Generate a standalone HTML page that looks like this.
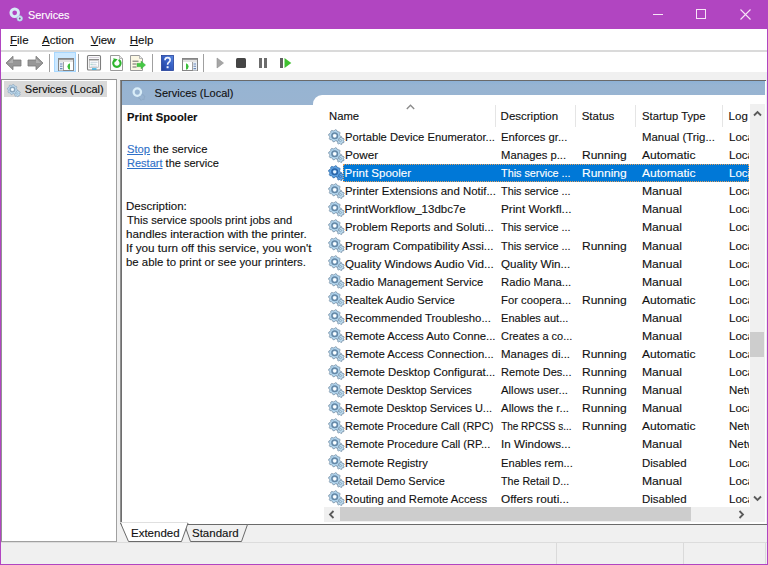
<!DOCTYPE html>
<html><head><meta charset="utf-8"><style>
*{box-sizing:border-box}
html,body{margin:0;padding:0}
body{width:768px;height:565px;position:relative;overflow:hidden;background:#f0f0f0;font-family:"Liberation Sans",sans-serif;font-size:12px;color:#111}
.a{position:absolute}
svg{display:block}
#title{left:0;top:0;width:768px;height:29px;background:#b145c1}
#title .t{left:28px;top:9px;color:#fff;font-size:11px;white-space:nowrap}
#menu{left:1px;top:29px;width:766px;height:21px;background:#fff}
#menu span{position:absolute;top:5px;font-size:12px}
#menu u{text-decoration:underline}
#msep{left:1px;top:50px;width:766px;height:2px;background:#dadada}
#tool{left:1px;top:52px;width:766px;height:20px;background:#fff}
#bl{left:0;top:0;width:1px;height:565px;background:#b145c1}
#br{left:767px;top:0;width:1px;height:565px;background:#b145c1}
#bb{left:0;top:564px;width:768px;height:1px;background:#b145c1}
#lp{left:1px;top:79px;width:116px;height:463px;background:#fff;border:1px solid #929292;border-right-color:#a0a0a0;border-bottom-color:#a0a0a0}
#lsel{left:4px;top:81px;width:103px;height:16px;background:#d9d9d9}
#lsel span{position:absolute;left:21px;top:2px;font-size:11px;white-space:nowrap}
#rp{left:120px;top:80px;width:646px;height:444px;background:#fff;border-left:1px solid #8f8f8f;border-top:1px solid #6a6a6a;box-shadow:inset 1px 0 0 #6e6e6e}
#hdr{left:122px;top:81px;width:643px;height:24px;background:linear-gradient(#8db1d6 0,#97b4d2 4px,#99b4d1 100%)}
#hdr span{position:absolute;left:34px;top:6px;color:#1e1e1e;font-size:11px;white-space:nowrap}
#tab{left:313px;top:95px;width:452px;height:30px;background:#fff;border-top-left-radius:9px}
#desc{left:127px;top:0;width:190px;color:#1a1a1a;font-size:11.5px}
#desc div{position:absolute;left:0;white-space:nowrap}
.t{position:absolute;white-space:nowrap;line-height:14px;-webkit-text-stroke:0.12px currentColor}
.lnk{color:#2f70c8;text-decoration:underline}
.row{position:absolute;left:322px;width:427px;height:18px;overflow:hidden}
.row span{position:absolute;top:2px;-webkit-text-stroke:0.12px currentColor;white-space:nowrap;font-size:11.5px;line-height:14px;transform-origin:1px 0}
.ic{position:absolute;left:4.5px;top:-0.5px;width:18px;height:18px}
.hl{position:absolute;left:21px;top:0;width:406px;height:18px;background:#0078d7;outline:1px dotted #e0a060;outline-offset:-1px}
.sel span{color:#fff}
.c1{left:22.5px}.c2{left:179px}.c3{left:260px}.c4{left:320px}.c5{left:407px}
#colhdr span{position:absolute;top:110px;font-size:11.5px;letter-spacing:-0.2px}
.vsep{position:absolute;top:105px;width:1px;height:22px;background:#e5e5e5}
#vsb{left:750px;top:104px;width:15px;height:403px;background:#f0f0f0}
#vth{left:750px;top:332px;width:14px;height:25px;background:#cdcdcd}
#hsb{left:324px;top:507px;width:441px;height:15px;background:#f0f0f0}
#hth{left:340px;top:507px;width:351px;height:14px;background:#cdcdcd}
#tabs{left:121px;top:525px;width:646px;height:17px;background:#f0f0f0}
#tabline{left:121px;top:524px;width:646px;height:1px;background:#6a6a6a}
#status{left:1px;top:542px;width:766px;height:22px;background:#f0f0f0;border-top:1px solid #dcdcdc}
.tsep{position:absolute;top:54px;width:1px;height:18px;background:#a0a0a0}
</style></head><body>
<div id="title" class="a">
  <svg class="a" style="left:8px;top:7px" width="16" height="15" viewBox="0 0 16 15"><circle cx="6.7" cy="5.8" r="3.8" fill="none" stroke="#d6ecf6" stroke-width="2.9"/><circle cx="11.75" cy="11.4" r="2.7" fill="#cfe6f3" stroke="#a9cde6" stroke-width="0.8"/><circle cx="11.75" cy="11.4" r="1" fill="#7a5a8a"/></svg>
    <div class="a" style="left:653px;top:14px;width:10px;height:1px;background:#f6e6f6"></div>
  <div class="a" style="left:696px;top:9px;width:10px;height:10px;border:1px solid #f6e6f6"></div>
  <svg class="a" style="left:740px;top:9px" width="11" height="11" viewBox="0 0 11 11"><path d="M0.5,0.5 L10.5,10.5 M10.5,0.5 L0.5,10.5" stroke="#f6e6f6" stroke-width="1.1"/></svg>
</div>
<div id="menu" class="a"></div>
<div id="msep" class="a"></div>
<div id="tool" class="a"></div>
<svg class="a" style="left:5px;top:55px" width="17" height="16" viewBox="0 0 17 16"><path d="M1,8 L8,1.2 L8,5 L16,5 L16,11 L8,11 L8,14.8 Z" fill="#979797" stroke="#7a7a7a" stroke-width="0.8"/><path d="M3,8 L8,3.5 L8,8 Z" fill="#b0b0b0"/></svg>
<svg class="a" style="left:27px;top:55px" width="17" height="16" viewBox="0 0 17 16"><path d="M16,8 L9,1.2 L9,5 L1,5 L1,11 L9,11 L9,14.8 Z" fill="#979797" stroke="#7a7a7a" stroke-width="0.8"/><path d="M14,8 L9,3.5 L9,8 Z" fill="#b0b0b0"/></svg>
<div class="tsep" style="left:49px"></div>
<div class="a" style="left:54px;top:52px;width:22px;height:20px;background:#cce8ff;border:1px solid #a8d8ff"></div>
<svg class="a" style="left:58px;top:58px" width="16" height="13" viewBox="0 0 16 13"><rect x="0.5" y="0.5" width="15" height="12" fill="#fff" stroke="#858585"/><rect x="1" y="1" width="14" height="1" fill="#9a9a9a"/><rect x="1" y="2.5" width="14" height="1" fill="#c8c8c8"/><rect x="1" y="4" width="4" height="8.5" fill="#e8eef4"/><path d="M5.5,4 V12.5" stroke="#8a8a8a" stroke-width="0.8"/><path d="M2,6 h2.5 M2,8.3 h2.5 M2,10.6 h2.5" stroke="#6a88b8" stroke-width="1.1"/><path d="M12,5.2 A3.4,3.4 0 0 0 12,11.8 Z" fill="#3cbf3c"/></svg>
<div class="tsep" style="left:78px"></div>
<svg class="a" style="left:86px;top:54px" width="16" height="17" viewBox="0 0 16 17"><rect x="1.5" y="1.5" width="13" height="14.5" rx="1" fill="#fafafa" stroke="#7e7e7e" stroke-width="1.1"/><path d="M3,3.6 h10" stroke="#d8d0dc" stroke-width="1"/><path d="M3,5.5 h10" stroke="#808080" stroke-width="0.9"/><rect x="3.5" y="6.5" width="9" height="7" fill="#fff" stroke="#a8a8a8" stroke-width="0.6"/><path d="M4.5,8.3 h7 M4.5,10.3 h6 M4.5,12.2 h7" stroke="#b8c8d4" stroke-width="0.8"/><path d="M4.5,10.3 h2" stroke="#9cd8c8" stroke-width="0.8"/><rect x="6" y="14.2" width="4.5" height="1.6" fill="#38b0e0"/></svg>
<svg class="a" style="left:110px;top:55px" width="14" height="17" viewBox="0 0 14 17"><path d="M0.5,0.5 H9.5 L12.5,3.5 V15.5 H0.5 Z" fill="#fdfdfd" stroke="#9a9a9a"/><path d="M9.5,0.5 V3.5 H12.5" fill="#e8e8e8" stroke="#a8a8a8" stroke-width="0.8"/><path d="M8.6,4.9 A3.7,3.7 0 1 1 5.2,4.9" fill="none" stroke="#2db42d" stroke-width="2.1"/><path d="M3.2,3.2 L7.6,4.2 L4.6,7.6 Z" fill="#2db42d"/></svg>
<svg class="a" style="left:130px;top:55px" width="17" height="17" viewBox="0 0 17 17"><path d="M0.5,0.5 H9.5 L12.5,3.5 V15.5 H0.5 Z" fill="#fbf7e4" stroke="#9a9a9a"/><path d="M9.5,0.5 V3.5 H12.5" fill="#eee" stroke="#a8a8a8" stroke-width="0.8"/><path d="M2.5,6.2 h6 M2.5,9 h4 M2.5,12 h4" stroke="#5a5a5a" stroke-width="0.9"/><path d="M7,8.3 H11 V6 L15.6,10 L11,14 V11.7 H7 Z" fill="#45c845" stroke="#3aa83a" stroke-width="0.4"/></svg>
<div class="tsep" style="left:152px"></div>
<svg class="a" style="left:160.5px;top:55px" width="13" height="16" viewBox="0 0 13 16"><defs><linearGradient id="hg" x1="0" y1="1" x2="1" y2="0"><stop offset="0" stop-color="#1f3f9e"/><stop offset="0.6" stop-color="#3a64c8"/><stop offset="1" stop-color="#5a8ae0"/></linearGradient></defs><rect x="0.5" y="0.5" width="12" height="15" fill="url(#hg)" stroke="#23409a" stroke-width="0.8"/><path d="M4,5.2 Q4,2.6 6.6,2.6 Q9.2,2.6 9.2,5 Q9.2,6.6 7.6,7.5 Q6.6,8.1 6.6,9.8" fill="none" stroke="#f0f4ff" stroke-width="1.6"/><rect x="5.6" y="11.2" width="2" height="2" fill="#f0f4ff"/></svg>
<svg class="a" style="left:182px;top:58px" width="16" height="13" viewBox="0 0 16 13"><rect x="0.5" y="0.5" width="15" height="12" fill="#fff" stroke="#858585"/><rect x="1" y="1" width="14" height="1" fill="#9a9a9a"/><rect x="1" y="2.5" width="14" height="1" fill="#c8c8c8"/><rect x="11" y="4" width="4" height="8.5" fill="#e8eef4"/><path d="M10.5,4 V12.5" stroke="#8a8a8a" stroke-width="0.8"/><path d="M11.5,6 h2.5 M11.5,8.3 h2.5 M11.5,10.6 h2.5" stroke="#6a88b8" stroke-width="1.1"/><path d="M4,5.2 A3.4,3.4 0 0 1 4,11.8 Z" fill="#3cbf3c"/></svg>
<div class="tsep" style="left:203px"></div>
<svg class="a" style="left:216px;top:57px" width="9" height="12" viewBox="0 0 9 12"><path d="M1,1 L7.5,6 L1,11 Z" fill="#a6a6a6" stroke="#909090" stroke-width="0.6"/></svg>
<div class="a" style="left:236px;top:58px;width:10px;height:10px;background:#454545;border-radius:1.5px"></div>
<div class="a" style="left:259px;top:58px;width:3px;height:10px;background:#6c6c6c"></div><div class="a" style="left:264px;top:58px;width:3px;height:10px;background:#6c6c6c"></div>
<div class="a" style="left:280px;top:58px;width:3px;height:10px;background:#606060"></div><svg class="a" style="left:284px;top:57px" width="8" height="12" viewBox="0 0 8 12"><path d="M0.5,1 L7.3,6 L0.5,11 Z" fill="#40c030"/></svg>
<div id="lp" class="a"></div>
<div id="lsel" class="a"><div class="a" style="left:2px;top:2px;width:15px;height:15px"><svg width="15" height="15" viewBox="0 0 18 18"><path d="M13.84,8.72 L14.69,8.92 L15.00,10.06 L15.52,10.48 L16.70,10.53 L17.08,11.31 L16.38,12.26 L16.38,12.94 L17.08,13.89 L16.70,14.67 L15.52,14.72 L15.00,15.14 L14.69,16.28 L13.84,16.48 L13.06,15.58 L12.41,15.43 L11.33,15.90 L10.64,15.36 L10.86,14.20 L10.57,13.59 L9.52,13.04 L9.52,12.16 L10.57,11.61 L10.86,11.00 L10.64,9.84 L11.33,9.30 L12.41,9.77 L13.06,9.62Z" fill="#bcdcf0" stroke="#8aa4ba" stroke-width="0.9"/><circle cx="13.4" cy="12.6" r="1.1" fill="none" stroke="#8aa4ba" stroke-width="0.6"/><path d="M8.30,1.73 L9.47,1.96 L10.10,3.30 L10.94,3.86 L12.42,3.93 L13.08,4.92 L12.58,6.32 L12.78,7.30 L13.77,8.40 L13.54,9.57 L12.20,10.20 L11.64,11.04 L11.57,12.52 L10.58,13.18 L9.18,12.68 L8.20,12.88 L7.10,13.87 L5.93,13.64 L5.30,12.30 L4.46,11.74 L2.98,11.67 L2.32,10.68 L2.82,9.28 L2.62,8.30 L1.63,7.20 L1.86,6.03 L3.20,5.40 L3.76,4.56 L3.83,3.08 L4.82,2.42 L6.22,2.92 L7.20,2.72Z" fill="#bcd8ee" stroke="#8aa4ba" stroke-width="0.8"/><circle cx="7.7" cy="7.8" r="2.8" fill="none" stroke="#8aa4ba" stroke-width="1.5"/><circle cx="7.7" cy="7.8" r="1.6" fill="#fff"/></svg></div></div>
<div id="rp" class="a"></div>
<div id="hdr" class="a"><svg class="a" style="left:7px;top:4px" width="20" height="20" viewBox="0 0 20 20"><path d="M13.22,9.03 L14.02,9.24 L14.20,10.38 L14.62,10.80 L15.76,10.98 L15.97,11.78 L15.08,12.50 L14.92,13.08 L15.34,14.15 L14.75,14.74 L13.68,14.32 L13.10,14.48 L12.38,15.37 L11.58,15.16 L11.40,14.02 L10.98,13.60 L9.84,13.42 L9.63,12.62 L10.52,11.90 L10.68,11.32 L10.26,10.25 L10.85,9.66 L11.92,10.08 L12.50,9.92Z" fill="none" stroke="#8aa6c2" stroke-width="0.9" opacity="0.8"/><circle cx="8.3" cy="7.1" r="3.7" fill="none" stroke="#d9edf8" stroke-width="2.3"/></svg></div>
<div id="tab" class="a"></div>
<svg class="a" style="left:406px;top:104px" width="9" height="6" viewBox="0 0 9 6"><path d="M0.8,5 L4.5,1.2 L8.2,5" fill="none" stroke="#8a8a8a" stroke-width="1.3"/></svg>
<div class="vsep" style="left:495px"></div>
<div class="vsep" style="left:575px"></div>
<div class="vsep" style="left:635px"></div>
<div class="vsep" style="left:722px"></div>
<div class="row" style="top:128.0px"><div class="ic"><svg width="18" height="18" viewBox="0 0 18 18"><path d="M13.84,8.72 L14.69,8.92 L15.00,10.06 L15.52,10.48 L16.70,10.53 L17.08,11.31 L16.38,12.26 L16.38,12.94 L17.08,13.89 L16.70,14.67 L15.52,14.72 L15.00,15.14 L14.69,16.28 L13.84,16.48 L13.06,15.58 L12.41,15.43 L11.33,15.90 L10.64,15.36 L10.86,14.20 L10.57,13.59 L9.52,13.04 L9.52,12.16 L10.57,11.61 L10.86,11.00 L10.64,9.84 L11.33,9.30 L12.41,9.77 L13.06,9.62Z" fill="#bcdcf0" stroke="#7890a6" stroke-width="0.9"/><circle cx="13.4" cy="12.6" r="1.1" fill="none" stroke="#7890a6" stroke-width="0.6"/><path d="M8.30,1.73 L9.47,1.96 L10.10,3.30 L10.94,3.86 L12.42,3.93 L13.08,4.92 L12.58,6.32 L12.78,7.30 L13.77,8.40 L13.54,9.57 L12.20,10.20 L11.64,11.04 L11.57,12.52 L10.58,13.18 L9.18,12.68 L8.20,12.88 L7.10,13.87 L5.93,13.64 L5.30,12.30 L4.46,11.74 L2.98,11.67 L2.32,10.68 L2.82,9.28 L2.62,8.30 L1.63,7.20 L1.86,6.03 L3.20,5.40 L3.76,4.56 L3.83,3.08 L4.82,2.42 L6.22,2.92 L7.20,2.72Z" fill="#b1d5ee" stroke="#7890a6" stroke-width="0.8"/><circle cx="7.7" cy="7.8" r="2.8" fill="none" stroke="#6688a6" stroke-width="1.5"/><circle cx="7.7" cy="7.8" r="1.6" fill="#fff"/></svg></div><span class="c1" style="transform:scaleX(0.977)">Portable Device Enumerator...</span><span class="c2" style="transform:scaleX(0.978)">Enforces gr...</span><span class="c4" style="transform:scaleX(0.989)">Manual (Trig...</span><span class="c5">Loca</span></div>
<div class="row" style="top:146.09px"><div class="ic"><svg width="18" height="18" viewBox="0 0 18 18"><path d="M13.84,8.72 L14.69,8.92 L15.00,10.06 L15.52,10.48 L16.70,10.53 L17.08,11.31 L16.38,12.26 L16.38,12.94 L17.08,13.89 L16.70,14.67 L15.52,14.72 L15.00,15.14 L14.69,16.28 L13.84,16.48 L13.06,15.58 L12.41,15.43 L11.33,15.90 L10.64,15.36 L10.86,14.20 L10.57,13.59 L9.52,13.04 L9.52,12.16 L10.57,11.61 L10.86,11.00 L10.64,9.84 L11.33,9.30 L12.41,9.77 L13.06,9.62Z" fill="#bcdcf0" stroke="#7890a6" stroke-width="0.9"/><circle cx="13.4" cy="12.6" r="1.1" fill="none" stroke="#7890a6" stroke-width="0.6"/><path d="M8.30,1.73 L9.47,1.96 L10.10,3.30 L10.94,3.86 L12.42,3.93 L13.08,4.92 L12.58,6.32 L12.78,7.30 L13.77,8.40 L13.54,9.57 L12.20,10.20 L11.64,11.04 L11.57,12.52 L10.58,13.18 L9.18,12.68 L8.20,12.88 L7.10,13.87 L5.93,13.64 L5.30,12.30 L4.46,11.74 L2.98,11.67 L2.32,10.68 L2.82,9.28 L2.62,8.30 L1.63,7.20 L1.86,6.03 L3.20,5.40 L3.76,4.56 L3.83,3.08 L4.82,2.42 L6.22,2.92 L7.20,2.72Z" fill="#b1d5ee" stroke="#7890a6" stroke-width="0.8"/><circle cx="7.7" cy="7.8" r="2.8" fill="none" stroke="#6688a6" stroke-width="1.5"/><circle cx="7.7" cy="7.8" r="1.6" fill="#fff"/></svg></div><span class="c1" style="transform:scaleX(1.020)">Power</span><span class="c2" style="transform:scaleX(0.978)">Manages p...</span><span class="c3" style="transform:scaleX(1.045)">Running</span><span class="c4" style="transform:scaleX(1.048)">Automatic</span><span class="c5">Loca</span></div>
<div class="row sel" style="top:164.17px"><div class="ic"><svg width="18" height="18" viewBox="0 0 18 18"><path d="M13.84,8.72 L14.69,8.92 L15.00,10.06 L15.52,10.48 L16.70,10.53 L17.08,11.31 L16.38,12.26 L16.38,12.94 L17.08,13.89 L16.70,14.67 L15.52,14.72 L15.00,15.14 L14.69,16.28 L13.84,16.48 L13.06,15.58 L12.41,15.43 L11.33,15.90 L10.64,15.36 L10.86,14.20 L10.57,13.59 L9.52,13.04 L9.52,12.16 L10.57,11.61 L10.86,11.00 L10.64,9.84 L11.33,9.30 L12.41,9.77 L13.06,9.62Z" fill="#5fa2e2" stroke="#2a68a8" stroke-width="0.9"/><circle cx="13.4" cy="12.6" r="1.1" fill="none" stroke="#2a68a8" stroke-width="0.6"/><path d="M8.30,1.73 L9.47,1.96 L10.10,3.30 L10.94,3.86 L12.42,3.93 L13.08,4.92 L12.58,6.32 L12.78,7.30 L13.77,8.40 L13.54,9.57 L12.20,10.20 L11.64,11.04 L11.57,12.52 L10.58,13.18 L9.18,12.68 L8.20,12.88 L7.10,13.87 L5.93,13.64 L5.30,12.30 L4.46,11.74 L2.98,11.67 L2.32,10.68 L2.82,9.28 L2.62,8.30 L1.63,7.20 L1.86,6.03 L3.20,5.40 L3.76,4.56 L3.83,3.08 L4.82,2.42 L6.22,2.92 L7.20,2.72Z" fill="#5fa2e2" stroke="#2a68a8" stroke-width="0.8"/><circle cx="7.7" cy="7.8" r="2.8" fill="none" stroke="#2a64a6" stroke-width="1.5"/><circle cx="7.7" cy="7.8" r="1.6" fill="#eaf4fd"/></svg></div><div class="hl"></div><span class="c1">Print Spooler</span><span class="c2" style="transform:scaleX(0.938)">This service ...</span><span class="c3" style="transform:scaleX(1.045)">Running</span><span class="c4" style="transform:scaleX(1.048)">Automatic</span><span class="c5">Loca</span></div>
<div class="row" style="top:182.25px"><div class="ic"><svg width="18" height="18" viewBox="0 0 18 18"><path d="M13.84,8.72 L14.69,8.92 L15.00,10.06 L15.52,10.48 L16.70,10.53 L17.08,11.31 L16.38,12.26 L16.38,12.94 L17.08,13.89 L16.70,14.67 L15.52,14.72 L15.00,15.14 L14.69,16.28 L13.84,16.48 L13.06,15.58 L12.41,15.43 L11.33,15.90 L10.64,15.36 L10.86,14.20 L10.57,13.59 L9.52,13.04 L9.52,12.16 L10.57,11.61 L10.86,11.00 L10.64,9.84 L11.33,9.30 L12.41,9.77 L13.06,9.62Z" fill="#bcdcf0" stroke="#7890a6" stroke-width="0.9"/><circle cx="13.4" cy="12.6" r="1.1" fill="none" stroke="#7890a6" stroke-width="0.6"/><path d="M8.30,1.73 L9.47,1.96 L10.10,3.30 L10.94,3.86 L12.42,3.93 L13.08,4.92 L12.58,6.32 L12.78,7.30 L13.77,8.40 L13.54,9.57 L12.20,10.20 L11.64,11.04 L11.57,12.52 L10.58,13.18 L9.18,12.68 L8.20,12.88 L7.10,13.87 L5.93,13.64 L5.30,12.30 L4.46,11.74 L2.98,11.67 L2.32,10.68 L2.82,9.28 L2.62,8.30 L1.63,7.20 L1.86,6.03 L3.20,5.40 L3.76,4.56 L3.83,3.08 L4.82,2.42 L6.22,2.92 L7.20,2.72Z" fill="#b1d5ee" stroke="#7890a6" stroke-width="0.8"/><circle cx="7.7" cy="7.8" r="2.8" fill="none" stroke="#6688a6" stroke-width="1.5"/><circle cx="7.7" cy="7.8" r="1.6" fill="#fff"/></svg></div><span class="c1" style="transform:scaleX(0.992)">Printer Extensions and Notif...</span><span class="c2" style="transform:scaleX(0.938)">This service ...</span><span class="c4" style="transform:scaleX(1.060)">Manual</span><span class="c5">Loca</span></div>
<div class="row" style="top:200.34px"><div class="ic"><svg width="18" height="18" viewBox="0 0 18 18"><path d="M13.84,8.72 L14.69,8.92 L15.00,10.06 L15.52,10.48 L16.70,10.53 L17.08,11.31 L16.38,12.26 L16.38,12.94 L17.08,13.89 L16.70,14.67 L15.52,14.72 L15.00,15.14 L14.69,16.28 L13.84,16.48 L13.06,15.58 L12.41,15.43 L11.33,15.90 L10.64,15.36 L10.86,14.20 L10.57,13.59 L9.52,13.04 L9.52,12.16 L10.57,11.61 L10.86,11.00 L10.64,9.84 L11.33,9.30 L12.41,9.77 L13.06,9.62Z" fill="#bcdcf0" stroke="#7890a6" stroke-width="0.9"/><circle cx="13.4" cy="12.6" r="1.1" fill="none" stroke="#7890a6" stroke-width="0.6"/><path d="M8.30,1.73 L9.47,1.96 L10.10,3.30 L10.94,3.86 L12.42,3.93 L13.08,4.92 L12.58,6.32 L12.78,7.30 L13.77,8.40 L13.54,9.57 L12.20,10.20 L11.64,11.04 L11.57,12.52 L10.58,13.18 L9.18,12.68 L8.20,12.88 L7.10,13.87 L5.93,13.64 L5.30,12.30 L4.46,11.74 L2.98,11.67 L2.32,10.68 L2.82,9.28 L2.62,8.30 L1.63,7.20 L1.86,6.03 L3.20,5.40 L3.76,4.56 L3.83,3.08 L4.82,2.42 L6.22,2.92 L7.20,2.72Z" fill="#b1d5ee" stroke="#7890a6" stroke-width="0.8"/><circle cx="7.7" cy="7.8" r="2.8" fill="none" stroke="#6688a6" stroke-width="1.5"/><circle cx="7.7" cy="7.8" r="1.6" fill="#fff"/></svg></div><span class="c1">PrintWorkflow_13dbc7e</span><span class="c2" style="transform:scaleX(1.024)">Print Workfl...</span><span class="c4" style="transform:scaleX(1.060)">Manual</span><span class="c5">Loca</span></div>
<div class="row" style="top:218.43px"><div class="ic"><svg width="18" height="18" viewBox="0 0 18 18"><path d="M13.84,8.72 L14.69,8.92 L15.00,10.06 L15.52,10.48 L16.70,10.53 L17.08,11.31 L16.38,12.26 L16.38,12.94 L17.08,13.89 L16.70,14.67 L15.52,14.72 L15.00,15.14 L14.69,16.28 L13.84,16.48 L13.06,15.58 L12.41,15.43 L11.33,15.90 L10.64,15.36 L10.86,14.20 L10.57,13.59 L9.52,13.04 L9.52,12.16 L10.57,11.61 L10.86,11.00 L10.64,9.84 L11.33,9.30 L12.41,9.77 L13.06,9.62Z" fill="#bcdcf0" stroke="#7890a6" stroke-width="0.9"/><circle cx="13.4" cy="12.6" r="1.1" fill="none" stroke="#7890a6" stroke-width="0.6"/><path d="M8.30,1.73 L9.47,1.96 L10.10,3.30 L10.94,3.86 L12.42,3.93 L13.08,4.92 L12.58,6.32 L12.78,7.30 L13.77,8.40 L13.54,9.57 L12.20,10.20 L11.64,11.04 L11.57,12.52 L10.58,13.18 L9.18,12.68 L8.20,12.88 L7.10,13.87 L5.93,13.64 L5.30,12.30 L4.46,11.74 L2.98,11.67 L2.32,10.68 L2.82,9.28 L2.62,8.30 L1.63,7.20 L1.86,6.03 L3.20,5.40 L3.76,4.56 L3.83,3.08 L4.82,2.42 L6.22,2.92 L7.20,2.72Z" fill="#b1d5ee" stroke="#7890a6" stroke-width="0.8"/><circle cx="7.7" cy="7.8" r="2.8" fill="none" stroke="#6688a6" stroke-width="1.5"/><circle cx="7.7" cy="7.8" r="1.6" fill="#fff"/></svg></div><span class="c1" style="transform:scaleX(0.990)">Problem Reports and Soluti...</span><span class="c2" style="transform:scaleX(0.938)">This service ...</span><span class="c4" style="transform:scaleX(1.060)">Manual</span><span class="c5">Loca</span></div>
<div class="row" style="top:236.51px"><div class="ic"><svg width="18" height="18" viewBox="0 0 18 18"><path d="M13.84,8.72 L14.69,8.92 L15.00,10.06 L15.52,10.48 L16.70,10.53 L17.08,11.31 L16.38,12.26 L16.38,12.94 L17.08,13.89 L16.70,14.67 L15.52,14.72 L15.00,15.14 L14.69,16.28 L13.84,16.48 L13.06,15.58 L12.41,15.43 L11.33,15.90 L10.64,15.36 L10.86,14.20 L10.57,13.59 L9.52,13.04 L9.52,12.16 L10.57,11.61 L10.86,11.00 L10.64,9.84 L11.33,9.30 L12.41,9.77 L13.06,9.62Z" fill="#bcdcf0" stroke="#7890a6" stroke-width="0.9"/><circle cx="13.4" cy="12.6" r="1.1" fill="none" stroke="#7890a6" stroke-width="0.6"/><path d="M8.30,1.73 L9.47,1.96 L10.10,3.30 L10.94,3.86 L12.42,3.93 L13.08,4.92 L12.58,6.32 L12.78,7.30 L13.77,8.40 L13.54,9.57 L12.20,10.20 L11.64,11.04 L11.57,12.52 L10.58,13.18 L9.18,12.68 L8.20,12.88 L7.10,13.87 L5.93,13.64 L5.30,12.30 L4.46,11.74 L2.98,11.67 L2.32,10.68 L2.82,9.28 L2.62,8.30 L1.63,7.20 L1.86,6.03 L3.20,5.40 L3.76,4.56 L3.83,3.08 L4.82,2.42 L6.22,2.92 L7.20,2.72Z" fill="#b1d5ee" stroke="#7890a6" stroke-width="0.8"/><circle cx="7.7" cy="7.8" r="2.8" fill="none" stroke="#6688a6" stroke-width="1.5"/><circle cx="7.7" cy="7.8" r="1.6" fill="#fff"/></svg></div><span class="c1" style="transform:scaleX(1.010)">Program Compatibility Assi...</span><span class="c2" style="transform:scaleX(0.938)">This service ...</span><span class="c3" style="transform:scaleX(1.045)">Running</span><span class="c4" style="transform:scaleX(1.060)">Manual</span><span class="c5">Loca</span></div>
<div class="row" style="top:254.59px"><div class="ic"><svg width="18" height="18" viewBox="0 0 18 18"><path d="M13.84,8.72 L14.69,8.92 L15.00,10.06 L15.52,10.48 L16.70,10.53 L17.08,11.31 L16.38,12.26 L16.38,12.94 L17.08,13.89 L16.70,14.67 L15.52,14.72 L15.00,15.14 L14.69,16.28 L13.84,16.48 L13.06,15.58 L12.41,15.43 L11.33,15.90 L10.64,15.36 L10.86,14.20 L10.57,13.59 L9.52,13.04 L9.52,12.16 L10.57,11.61 L10.86,11.00 L10.64,9.84 L11.33,9.30 L12.41,9.77 L13.06,9.62Z" fill="#bcdcf0" stroke="#7890a6" stroke-width="0.9"/><circle cx="13.4" cy="12.6" r="1.1" fill="none" stroke="#7890a6" stroke-width="0.6"/><path d="M8.30,1.73 L9.47,1.96 L10.10,3.30 L10.94,3.86 L12.42,3.93 L13.08,4.92 L12.58,6.32 L12.78,7.30 L13.77,8.40 L13.54,9.57 L12.20,10.20 L11.64,11.04 L11.57,12.52 L10.58,13.18 L9.18,12.68 L8.20,12.88 L7.10,13.87 L5.93,13.64 L5.30,12.30 L4.46,11.74 L2.98,11.67 L2.32,10.68 L2.82,9.28 L2.62,8.30 L1.63,7.20 L1.86,6.03 L3.20,5.40 L3.76,4.56 L3.83,3.08 L4.82,2.42 L6.22,2.92 L7.20,2.72Z" fill="#b1d5ee" stroke="#7890a6" stroke-width="0.8"/><circle cx="7.7" cy="7.8" r="2.8" fill="none" stroke="#6688a6" stroke-width="1.5"/><circle cx="7.7" cy="7.8" r="1.6" fill="#fff"/></svg></div><span class="c1" style="transform:scaleX(1.013)">Quality Windows Audio Vid...</span><span class="c2" style="transform:scaleX(1.014)">Quality Win...</span><span class="c4" style="transform:scaleX(1.060)">Manual</span><span class="c5">Loca</span></div>
<div class="row" style="top:272.68px"><div class="ic"><svg width="18" height="18" viewBox="0 0 18 18"><path d="M13.84,8.72 L14.69,8.92 L15.00,10.06 L15.52,10.48 L16.70,10.53 L17.08,11.31 L16.38,12.26 L16.38,12.94 L17.08,13.89 L16.70,14.67 L15.52,14.72 L15.00,15.14 L14.69,16.28 L13.84,16.48 L13.06,15.58 L12.41,15.43 L11.33,15.90 L10.64,15.36 L10.86,14.20 L10.57,13.59 L9.52,13.04 L9.52,12.16 L10.57,11.61 L10.86,11.00 L10.64,9.84 L11.33,9.30 L12.41,9.77 L13.06,9.62Z" fill="#bcdcf0" stroke="#7890a6" stroke-width="0.9"/><circle cx="13.4" cy="12.6" r="1.1" fill="none" stroke="#7890a6" stroke-width="0.6"/><path d="M8.30,1.73 L9.47,1.96 L10.10,3.30 L10.94,3.86 L12.42,3.93 L13.08,4.92 L12.58,6.32 L12.78,7.30 L13.77,8.40 L13.54,9.57 L12.20,10.20 L11.64,11.04 L11.57,12.52 L10.58,13.18 L9.18,12.68 L8.20,12.88 L7.10,13.87 L5.93,13.64 L5.30,12.30 L4.46,11.74 L2.98,11.67 L2.32,10.68 L2.82,9.28 L2.62,8.30 L1.63,7.20 L1.86,6.03 L3.20,5.40 L3.76,4.56 L3.83,3.08 L4.82,2.42 L6.22,2.92 L7.20,2.72Z" fill="#b1d5ee" stroke="#7890a6" stroke-width="0.8"/><circle cx="7.7" cy="7.8" r="2.8" fill="none" stroke="#6688a6" stroke-width="1.5"/><circle cx="7.7" cy="7.8" r="1.6" fill="#fff"/></svg></div><span class="c1" style="transform:scaleX(0.974)">Radio Management Service</span><span class="c2" style="transform:scaleX(0.980)">Radio Mana...</span><span class="c4" style="transform:scaleX(1.060)">Manual</span><span class="c5">Loca</span></div>
<div class="row" style="top:290.76px"><div class="ic"><svg width="18" height="18" viewBox="0 0 18 18"><path d="M13.84,8.72 L14.69,8.92 L15.00,10.06 L15.52,10.48 L16.70,10.53 L17.08,11.31 L16.38,12.26 L16.38,12.94 L17.08,13.89 L16.70,14.67 L15.52,14.72 L15.00,15.14 L14.69,16.28 L13.84,16.48 L13.06,15.58 L12.41,15.43 L11.33,15.90 L10.64,15.36 L10.86,14.20 L10.57,13.59 L9.52,13.04 L9.52,12.16 L10.57,11.61 L10.86,11.00 L10.64,9.84 L11.33,9.30 L12.41,9.77 L13.06,9.62Z" fill="#bcdcf0" stroke="#7890a6" stroke-width="0.9"/><circle cx="13.4" cy="12.6" r="1.1" fill="none" stroke="#7890a6" stroke-width="0.6"/><path d="M8.30,1.73 L9.47,1.96 L10.10,3.30 L10.94,3.86 L12.42,3.93 L13.08,4.92 L12.58,6.32 L12.78,7.30 L13.77,8.40 L13.54,9.57 L12.20,10.20 L11.64,11.04 L11.57,12.52 L10.58,13.18 L9.18,12.68 L8.20,12.88 L7.10,13.87 L5.93,13.64 L5.30,12.30 L4.46,11.74 L2.98,11.67 L2.32,10.68 L2.82,9.28 L2.62,8.30 L1.63,7.20 L1.86,6.03 L3.20,5.40 L3.76,4.56 L3.83,3.08 L4.82,2.42 L6.22,2.92 L7.20,2.72Z" fill="#b1d5ee" stroke="#7890a6" stroke-width="0.8"/><circle cx="7.7" cy="7.8" r="2.8" fill="none" stroke="#6688a6" stroke-width="1.5"/><circle cx="7.7" cy="7.8" r="1.6" fill="#fff"/></svg></div><span class="c1" style="transform:scaleX(0.975)">Realtek Audio Service</span><span class="c2" style="transform:scaleX(0.980)">For coopera...</span><span class="c3" style="transform:scaleX(1.045)">Running</span><span class="c4" style="transform:scaleX(1.048)">Automatic</span><span class="c5">Loca</span></div>
<div class="row" style="top:308.85px"><div class="ic"><svg width="18" height="18" viewBox="0 0 18 18"><path d="M13.84,8.72 L14.69,8.92 L15.00,10.06 L15.52,10.48 L16.70,10.53 L17.08,11.31 L16.38,12.26 L16.38,12.94 L17.08,13.89 L16.70,14.67 L15.52,14.72 L15.00,15.14 L14.69,16.28 L13.84,16.48 L13.06,15.58 L12.41,15.43 L11.33,15.90 L10.64,15.36 L10.86,14.20 L10.57,13.59 L9.52,13.04 L9.52,12.16 L10.57,11.61 L10.86,11.00 L10.64,9.84 L11.33,9.30 L12.41,9.77 L13.06,9.62Z" fill="#bcdcf0" stroke="#7890a6" stroke-width="0.9"/><circle cx="13.4" cy="12.6" r="1.1" fill="none" stroke="#7890a6" stroke-width="0.6"/><path d="M8.30,1.73 L9.47,1.96 L10.10,3.30 L10.94,3.86 L12.42,3.93 L13.08,4.92 L12.58,6.32 L12.78,7.30 L13.77,8.40 L13.54,9.57 L12.20,10.20 L11.64,11.04 L11.57,12.52 L10.58,13.18 L9.18,12.68 L8.20,12.88 L7.10,13.87 L5.93,13.64 L5.30,12.30 L4.46,11.74 L2.98,11.67 L2.32,10.68 L2.82,9.28 L2.62,8.30 L1.63,7.20 L1.86,6.03 L3.20,5.40 L3.76,4.56 L3.83,3.08 L4.82,2.42 L6.22,2.92 L7.20,2.72Z" fill="#b1d5ee" stroke="#7890a6" stroke-width="0.8"/><circle cx="7.7" cy="7.8" r="2.8" fill="none" stroke="#6688a6" stroke-width="1.5"/><circle cx="7.7" cy="7.8" r="1.6" fill="#fff"/></svg></div><span class="c1" style="transform:scaleX(0.988)">Recommended Troublesho...</span><span class="c2" style="transform:scaleX(0.957)">Enables aut...</span><span class="c4" style="transform:scaleX(1.060)">Manual</span><span class="c5">Loca</span></div>
<div class="row" style="top:326.94px"><div class="ic"><svg width="18" height="18" viewBox="0 0 18 18"><path d="M13.84,8.72 L14.69,8.92 L15.00,10.06 L15.52,10.48 L16.70,10.53 L17.08,11.31 L16.38,12.26 L16.38,12.94 L17.08,13.89 L16.70,14.67 L15.52,14.72 L15.00,15.14 L14.69,16.28 L13.84,16.48 L13.06,15.58 L12.41,15.43 L11.33,15.90 L10.64,15.36 L10.86,14.20 L10.57,13.59 L9.52,13.04 L9.52,12.16 L10.57,11.61 L10.86,11.00 L10.64,9.84 L11.33,9.30 L12.41,9.77 L13.06,9.62Z" fill="#bcdcf0" stroke="#7890a6" stroke-width="0.9"/><circle cx="13.4" cy="12.6" r="1.1" fill="none" stroke="#7890a6" stroke-width="0.6"/><path d="M8.30,1.73 L9.47,1.96 L10.10,3.30 L10.94,3.86 L12.42,3.93 L13.08,4.92 L12.58,6.32 L12.78,7.30 L13.77,8.40 L13.54,9.57 L12.20,10.20 L11.64,11.04 L11.57,12.52 L10.58,13.18 L9.18,12.68 L8.20,12.88 L7.10,13.87 L5.93,13.64 L5.30,12.30 L4.46,11.74 L2.98,11.67 L2.32,10.68 L2.82,9.28 L2.62,8.30 L1.63,7.20 L1.86,6.03 L3.20,5.40 L3.76,4.56 L3.83,3.08 L4.82,2.42 L6.22,2.92 L7.20,2.72Z" fill="#b1d5ee" stroke="#7890a6" stroke-width="0.8"/><circle cx="7.7" cy="7.8" r="2.8" fill="none" stroke="#6688a6" stroke-width="1.5"/><circle cx="7.7" cy="7.8" r="1.6" fill="#fff"/></svg></div><span class="c1" style="transform:scaleX(0.985)">Remote Access Auto Conne...</span><span class="c2" style="transform:scaleX(0.953)">Creates a co...</span><span class="c4" style="transform:scaleX(1.060)">Manual</span><span class="c5">Loca</span></div>
<div class="row" style="top:345.02px"><div class="ic"><svg width="18" height="18" viewBox="0 0 18 18"><path d="M13.84,8.72 L14.69,8.92 L15.00,10.06 L15.52,10.48 L16.70,10.53 L17.08,11.31 L16.38,12.26 L16.38,12.94 L17.08,13.89 L16.70,14.67 L15.52,14.72 L15.00,15.14 L14.69,16.28 L13.84,16.48 L13.06,15.58 L12.41,15.43 L11.33,15.90 L10.64,15.36 L10.86,14.20 L10.57,13.59 L9.52,13.04 L9.52,12.16 L10.57,11.61 L10.86,11.00 L10.64,9.84 L11.33,9.30 L12.41,9.77 L13.06,9.62Z" fill="#bcdcf0" stroke="#7890a6" stroke-width="0.9"/><circle cx="13.4" cy="12.6" r="1.1" fill="none" stroke="#7890a6" stroke-width="0.6"/><path d="M8.30,1.73 L9.47,1.96 L10.10,3.30 L10.94,3.86 L12.42,3.93 L13.08,4.92 L12.58,6.32 L12.78,7.30 L13.77,8.40 L13.54,9.57 L12.20,10.20 L11.64,11.04 L11.57,12.52 L10.58,13.18 L9.18,12.68 L8.20,12.88 L7.10,13.87 L5.93,13.64 L5.30,12.30 L4.46,11.74 L2.98,11.67 L2.32,10.68 L2.82,9.28 L2.62,8.30 L1.63,7.20 L1.86,6.03 L3.20,5.40 L3.76,4.56 L3.83,3.08 L4.82,2.42 L6.22,2.92 L7.20,2.72Z" fill="#b1d5ee" stroke="#7890a6" stroke-width="0.8"/><circle cx="7.7" cy="7.8" r="2.8" fill="none" stroke="#6688a6" stroke-width="1.5"/><circle cx="7.7" cy="7.8" r="1.6" fill="#fff"/></svg></div><span class="c1" style="transform:scaleX(0.986)">Remote Access Connection...</span><span class="c2">Manages di...</span><span class="c3" style="transform:scaleX(1.045)">Running</span><span class="c4" style="transform:scaleX(1.048)">Automatic</span><span class="c5">Loca</span></div>
<div class="row" style="top:363.11px"><div class="ic"><svg width="18" height="18" viewBox="0 0 18 18"><path d="M13.84,8.72 L14.69,8.92 L15.00,10.06 L15.52,10.48 L16.70,10.53 L17.08,11.31 L16.38,12.26 L16.38,12.94 L17.08,13.89 L16.70,14.67 L15.52,14.72 L15.00,15.14 L14.69,16.28 L13.84,16.48 L13.06,15.58 L12.41,15.43 L11.33,15.90 L10.64,15.36 L10.86,14.20 L10.57,13.59 L9.52,13.04 L9.52,12.16 L10.57,11.61 L10.86,11.00 L10.64,9.84 L11.33,9.30 L12.41,9.77 L13.06,9.62Z" fill="#bcdcf0" stroke="#7890a6" stroke-width="0.9"/><circle cx="13.4" cy="12.6" r="1.1" fill="none" stroke="#7890a6" stroke-width="0.6"/><path d="M8.30,1.73 L9.47,1.96 L10.10,3.30 L10.94,3.86 L12.42,3.93 L13.08,4.92 L12.58,6.32 L12.78,7.30 L13.77,8.40 L13.54,9.57 L12.20,10.20 L11.64,11.04 L11.57,12.52 L10.58,13.18 L9.18,12.68 L8.20,12.88 L7.10,13.87 L5.93,13.64 L5.30,12.30 L4.46,11.74 L2.98,11.67 L2.32,10.68 L2.82,9.28 L2.62,8.30 L1.63,7.20 L1.86,6.03 L3.20,5.40 L3.76,4.56 L3.83,3.08 L4.82,2.42 L6.22,2.92 L7.20,2.72Z" fill="#b1d5ee" stroke="#7890a6" stroke-width="0.8"/><circle cx="7.7" cy="7.8" r="2.8" fill="none" stroke="#6688a6" stroke-width="1.5"/><circle cx="7.7" cy="7.8" r="1.6" fill="#fff"/></svg></div><span class="c1" style="transform:scaleX(0.992)">Remote Desktop Configurat...</span><span class="c2" style="transform:scaleX(0.958)">Remote Des...</span><span class="c3" style="transform:scaleX(1.045)">Running</span><span class="c4" style="transform:scaleX(1.060)">Manual</span><span class="c5">Loca</span></div>
<div class="row" style="top:381.19px"><div class="ic"><svg width="18" height="18" viewBox="0 0 18 18"><path d="M13.84,8.72 L14.69,8.92 L15.00,10.06 L15.52,10.48 L16.70,10.53 L17.08,11.31 L16.38,12.26 L16.38,12.94 L17.08,13.89 L16.70,14.67 L15.52,14.72 L15.00,15.14 L14.69,16.28 L13.84,16.48 L13.06,15.58 L12.41,15.43 L11.33,15.90 L10.64,15.36 L10.86,14.20 L10.57,13.59 L9.52,13.04 L9.52,12.16 L10.57,11.61 L10.86,11.00 L10.64,9.84 L11.33,9.30 L12.41,9.77 L13.06,9.62Z" fill="#bcdcf0" stroke="#7890a6" stroke-width="0.9"/><circle cx="13.4" cy="12.6" r="1.1" fill="none" stroke="#7890a6" stroke-width="0.6"/><path d="M8.30,1.73 L9.47,1.96 L10.10,3.30 L10.94,3.86 L12.42,3.93 L13.08,4.92 L12.58,6.32 L12.78,7.30 L13.77,8.40 L13.54,9.57 L12.20,10.20 L11.64,11.04 L11.57,12.52 L10.58,13.18 L9.18,12.68 L8.20,12.88 L7.10,13.87 L5.93,13.64 L5.30,12.30 L4.46,11.74 L2.98,11.67 L2.32,10.68 L2.82,9.28 L2.62,8.30 L1.63,7.20 L1.86,6.03 L3.20,5.40 L3.76,4.56 L3.83,3.08 L4.82,2.42 L6.22,2.92 L7.20,2.72Z" fill="#b1d5ee" stroke="#7890a6" stroke-width="0.8"/><circle cx="7.7" cy="7.8" r="2.8" fill="none" stroke="#6688a6" stroke-width="1.5"/><circle cx="7.7" cy="7.8" r="1.6" fill="#fff"/></svg></div><span class="c1" style="transform:scaleX(0.953)">Remote Desktop Services</span><span class="c2" style="transform:scaleX(0.989)">Allows user...</span><span class="c3" style="transform:scaleX(1.045)">Running</span><span class="c4" style="transform:scaleX(1.060)">Manual</span><span class="c5">Netw</span></div>
<div class="row" style="top:399.28px"><div class="ic"><svg width="18" height="18" viewBox="0 0 18 18"><path d="M13.84,8.72 L14.69,8.92 L15.00,10.06 L15.52,10.48 L16.70,10.53 L17.08,11.31 L16.38,12.26 L16.38,12.94 L17.08,13.89 L16.70,14.67 L15.52,14.72 L15.00,15.14 L14.69,16.28 L13.84,16.48 L13.06,15.58 L12.41,15.43 L11.33,15.90 L10.64,15.36 L10.86,14.20 L10.57,13.59 L9.52,13.04 L9.52,12.16 L10.57,11.61 L10.86,11.00 L10.64,9.84 L11.33,9.30 L12.41,9.77 L13.06,9.62Z" fill="#bcdcf0" stroke="#7890a6" stroke-width="0.9"/><circle cx="13.4" cy="12.6" r="1.1" fill="none" stroke="#7890a6" stroke-width="0.6"/><path d="M8.30,1.73 L9.47,1.96 L10.10,3.30 L10.94,3.86 L12.42,3.93 L13.08,4.92 L12.58,6.32 L12.78,7.30 L13.77,8.40 L13.54,9.57 L12.20,10.20 L11.64,11.04 L11.57,12.52 L10.58,13.18 L9.18,12.68 L8.20,12.88 L7.10,13.87 L5.93,13.64 L5.30,12.30 L4.46,11.74 L2.98,11.67 L2.32,10.68 L2.82,9.28 L2.62,8.30 L1.63,7.20 L1.86,6.03 L3.20,5.40 L3.76,4.56 L3.83,3.08 L4.82,2.42 L6.22,2.92 L7.20,2.72Z" fill="#b1d5ee" stroke="#7890a6" stroke-width="0.8"/><circle cx="7.7" cy="7.8" r="2.8" fill="none" stroke="#6688a6" stroke-width="1.5"/><circle cx="7.7" cy="7.8" r="1.6" fill="#fff"/></svg></div><span class="c1" style="transform:scaleX(0.954)">Remote Desktop Services U...</span><span class="c2" style="transform:scaleX(0.994)">Allows the r...</span><span class="c3" style="transform:scaleX(1.045)">Running</span><span class="c4" style="transform:scaleX(1.060)">Manual</span><span class="c5">Loca</span></div>
<div class="row" style="top:417.36px"><div class="ic"><svg width="18" height="18" viewBox="0 0 18 18"><path d="M13.84,8.72 L14.69,8.92 L15.00,10.06 L15.52,10.48 L16.70,10.53 L17.08,11.31 L16.38,12.26 L16.38,12.94 L17.08,13.89 L16.70,14.67 L15.52,14.72 L15.00,15.14 L14.69,16.28 L13.84,16.48 L13.06,15.58 L12.41,15.43 L11.33,15.90 L10.64,15.36 L10.86,14.20 L10.57,13.59 L9.52,13.04 L9.52,12.16 L10.57,11.61 L10.86,11.00 L10.64,9.84 L11.33,9.30 L12.41,9.77 L13.06,9.62Z" fill="#bcdcf0" stroke="#7890a6" stroke-width="0.9"/><circle cx="13.4" cy="12.6" r="1.1" fill="none" stroke="#7890a6" stroke-width="0.6"/><path d="M8.30,1.73 L9.47,1.96 L10.10,3.30 L10.94,3.86 L12.42,3.93 L13.08,4.92 L12.58,6.32 L12.78,7.30 L13.77,8.40 L13.54,9.57 L12.20,10.20 L11.64,11.04 L11.57,12.52 L10.58,13.18 L9.18,12.68 L8.20,12.88 L7.10,13.87 L5.93,13.64 L5.30,12.30 L4.46,11.74 L2.98,11.67 L2.32,10.68 L2.82,9.28 L2.62,8.30 L1.63,7.20 L1.86,6.03 L3.20,5.40 L3.76,4.56 L3.83,3.08 L4.82,2.42 L6.22,2.92 L7.20,2.72Z" fill="#b1d5ee" stroke="#7890a6" stroke-width="0.8"/><circle cx="7.7" cy="7.8" r="2.8" fill="none" stroke="#6688a6" stroke-width="1.5"/><circle cx="7.7" cy="7.8" r="1.6" fill="#fff"/></svg></div><span class="c1" style="transform:scaleX(0.959)">Remote Procedure Call (RPC)</span><span class="c2" style="transform:scaleX(0.868)">The RPCSS s...</span><span class="c3" style="transform:scaleX(1.045)">Running</span><span class="c4" style="transform:scaleX(1.048)">Automatic</span><span class="c5">Netw</span></div>
<div class="row" style="top:435.44px"><div class="ic"><svg width="18" height="18" viewBox="0 0 18 18"><path d="M13.84,8.72 L14.69,8.92 L15.00,10.06 L15.52,10.48 L16.70,10.53 L17.08,11.31 L16.38,12.26 L16.38,12.94 L17.08,13.89 L16.70,14.67 L15.52,14.72 L15.00,15.14 L14.69,16.28 L13.84,16.48 L13.06,15.58 L12.41,15.43 L11.33,15.90 L10.64,15.36 L10.86,14.20 L10.57,13.59 L9.52,13.04 L9.52,12.16 L10.57,11.61 L10.86,11.00 L10.64,9.84 L11.33,9.30 L12.41,9.77 L13.06,9.62Z" fill="#bcdcf0" stroke="#7890a6" stroke-width="0.9"/><circle cx="13.4" cy="12.6" r="1.1" fill="none" stroke="#7890a6" stroke-width="0.6"/><path d="M8.30,1.73 L9.47,1.96 L10.10,3.30 L10.94,3.86 L12.42,3.93 L13.08,4.92 L12.58,6.32 L12.78,7.30 L13.77,8.40 L13.54,9.57 L12.20,10.20 L11.64,11.04 L11.57,12.52 L10.58,13.18 L9.18,12.68 L8.20,12.88 L7.10,13.87 L5.93,13.64 L5.30,12.30 L4.46,11.74 L2.98,11.67 L2.32,10.68 L2.82,9.28 L2.62,8.30 L1.63,7.20 L1.86,6.03 L3.20,5.40 L3.76,4.56 L3.83,3.08 L4.82,2.42 L6.22,2.92 L7.20,2.72Z" fill="#b1d5ee" stroke="#7890a6" stroke-width="0.8"/><circle cx="7.7" cy="7.8" r="2.8" fill="none" stroke="#6688a6" stroke-width="1.5"/><circle cx="7.7" cy="7.8" r="1.6" fill="#fff"/></svg></div><span class="c1" style="transform:scaleX(0.964)">Remote Procedure Call (RP...</span><span class="c2" style="transform:scaleX(1.011)">In Windows...</span><span class="c4" style="transform:scaleX(1.060)">Manual</span><span class="c5">Netw</span></div>
<div class="row" style="top:453.53px"><div class="ic"><svg width="18" height="18" viewBox="0 0 18 18"><path d="M13.84,8.72 L14.69,8.92 L15.00,10.06 L15.52,10.48 L16.70,10.53 L17.08,11.31 L16.38,12.26 L16.38,12.94 L17.08,13.89 L16.70,14.67 L15.52,14.72 L15.00,15.14 L14.69,16.28 L13.84,16.48 L13.06,15.58 L12.41,15.43 L11.33,15.90 L10.64,15.36 L10.86,14.20 L10.57,13.59 L9.52,13.04 L9.52,12.16 L10.57,11.61 L10.86,11.00 L10.64,9.84 L11.33,9.30 L12.41,9.77 L13.06,9.62Z" fill="#bcdcf0" stroke="#7890a6" stroke-width="0.9"/><circle cx="13.4" cy="12.6" r="1.1" fill="none" stroke="#7890a6" stroke-width="0.6"/><path d="M8.30,1.73 L9.47,1.96 L10.10,3.30 L10.94,3.86 L12.42,3.93 L13.08,4.92 L12.58,6.32 L12.78,7.30 L13.77,8.40 L13.54,9.57 L12.20,10.20 L11.64,11.04 L11.57,12.52 L10.58,13.18 L9.18,12.68 L8.20,12.88 L7.10,13.87 L5.93,13.64 L5.30,12.30 L4.46,11.74 L2.98,11.67 L2.32,10.68 L2.82,9.28 L2.62,8.30 L1.63,7.20 L1.86,6.03 L3.20,5.40 L3.76,4.56 L3.83,3.08 L4.82,2.42 L6.22,2.92 L7.20,2.72Z" fill="#b1d5ee" stroke="#7890a6" stroke-width="0.8"/><circle cx="7.7" cy="7.8" r="2.8" fill="none" stroke="#6688a6" stroke-width="1.5"/><circle cx="7.7" cy="7.8" r="1.6" fill="#fff"/></svg></div><span class="c1" style="transform:scaleX(0.965)">Remote Registry</span><span class="c2" style="transform:scaleX(0.968)">Enables rem...</span><span class="c4" style="transform:scaleX(0.995)">Disabled</span><span class="c5">Loca</span></div>
<div class="row" style="top:471.62px"><div class="ic"><svg width="18" height="18" viewBox="0 0 18 18"><path d="M13.84,8.72 L14.69,8.92 L15.00,10.06 L15.52,10.48 L16.70,10.53 L17.08,11.31 L16.38,12.26 L16.38,12.94 L17.08,13.89 L16.70,14.67 L15.52,14.72 L15.00,15.14 L14.69,16.28 L13.84,16.48 L13.06,15.58 L12.41,15.43 L11.33,15.90 L10.64,15.36 L10.86,14.20 L10.57,13.59 L9.52,13.04 L9.52,12.16 L10.57,11.61 L10.86,11.00 L10.64,9.84 L11.33,9.30 L12.41,9.77 L13.06,9.62Z" fill="#bcdcf0" stroke="#7890a6" stroke-width="0.9"/><circle cx="13.4" cy="12.6" r="1.1" fill="none" stroke="#7890a6" stroke-width="0.6"/><path d="M8.30,1.73 L9.47,1.96 L10.10,3.30 L10.94,3.86 L12.42,3.93 L13.08,4.92 L12.58,6.32 L12.78,7.30 L13.77,8.40 L13.54,9.57 L12.20,10.20 L11.64,11.04 L11.57,12.52 L10.58,13.18 L9.18,12.68 L8.20,12.88 L7.10,13.87 L5.93,13.64 L5.30,12.30 L4.46,11.74 L2.98,11.67 L2.32,10.68 L2.82,9.28 L2.62,8.30 L1.63,7.20 L1.86,6.03 L3.20,5.40 L3.76,4.56 L3.83,3.08 L4.82,2.42 L6.22,2.92 L7.20,2.72Z" fill="#b1d5ee" stroke="#7890a6" stroke-width="0.8"/><circle cx="7.7" cy="7.8" r="2.8" fill="none" stroke="#6688a6" stroke-width="1.5"/><circle cx="7.7" cy="7.8" r="1.6" fill="#fff"/></svg></div><span class="c1" style="transform:scaleX(0.952)">Retail Demo Service</span><span class="c2" style="transform:scaleX(0.926)">The Retail D...</span><span class="c4" style="transform:scaleX(1.060)">Manual</span><span class="c5">Loca</span></div>
<div class="row" style="top:489.7px"><div class="ic"><svg width="18" height="18" viewBox="0 0 18 18"><path d="M13.84,8.72 L14.69,8.92 L15.00,10.06 L15.52,10.48 L16.70,10.53 L17.08,11.31 L16.38,12.26 L16.38,12.94 L17.08,13.89 L16.70,14.67 L15.52,14.72 L15.00,15.14 L14.69,16.28 L13.84,16.48 L13.06,15.58 L12.41,15.43 L11.33,15.90 L10.64,15.36 L10.86,14.20 L10.57,13.59 L9.52,13.04 L9.52,12.16 L10.57,11.61 L10.86,11.00 L10.64,9.84 L11.33,9.30 L12.41,9.77 L13.06,9.62Z" fill="#bcdcf0" stroke="#7890a6" stroke-width="0.9"/><circle cx="13.4" cy="12.6" r="1.1" fill="none" stroke="#7890a6" stroke-width="0.6"/><path d="M8.30,1.73 L9.47,1.96 L10.10,3.30 L10.94,3.86 L12.42,3.93 L13.08,4.92 L12.58,6.32 L12.78,7.30 L13.77,8.40 L13.54,9.57 L12.20,10.20 L11.64,11.04 L11.57,12.52 L10.58,13.18 L9.18,12.68 L8.20,12.88 L7.10,13.87 L5.93,13.64 L5.30,12.30 L4.46,11.74 L2.98,11.67 L2.32,10.68 L2.82,9.28 L2.62,8.30 L1.63,7.20 L1.86,6.03 L3.20,5.40 L3.76,4.56 L3.83,3.08 L4.82,2.42 L6.22,2.92 L7.20,2.72Z" fill="#b1d5ee" stroke="#7890a6" stroke-width="0.8"/><circle cx="7.7" cy="7.8" r="2.8" fill="none" stroke="#6688a6" stroke-width="1.5"/><circle cx="7.7" cy="7.8" r="1.6" fill="#fff"/></svg></div><span class="c1" style="transform:scaleX(0.979)">Routing and Remote Access</span><span class="c2" style="transform:scaleX(1.029)">Offers routi...</span><span class="c4" style="transform:scaleX(0.995)">Disabled</span><span class="c5">Loca</span></div>
<div id="vsb" class="a"></div>
<div id="vth" class="a"></div>
<svg class="a" style="left:753px;top:110px" width="9" height="7" viewBox="0 0 9 7"><path d="M1,5.5 L4.5,2 L8,5.5" fill="none" stroke="#5a5a5a" stroke-width="1.8"/></svg>
<svg class="a" style="left:753px;top:495px" width="9" height="7" viewBox="0 0 9 7"><path d="M1,1.5 L4.5,5 L8,1.5" fill="none" stroke="#5a5a5a" stroke-width="1.8"/></svg>
<div id="hsb" class="a"></div>
<div id="hth" class="a"></div>
<svg class="a" style="left:328px;top:510px" width="7" height="9" viewBox="0 0 7 9"><path d="M5.5,1 L2,4.5 L5.5,8" fill="none" stroke="#5a5a5a" stroke-width="1.8"/></svg>
<svg class="a" style="left:738px;top:510px" width="7" height="9" viewBox="0 0 7 9"><path d="M1.5,1 L5,4.5 L1.5,8" fill="none" stroke="#5a5a5a" stroke-width="1.8"/></svg>
<div id="tabline" class="a"></div>
<div id="tabs" class="a"></div>
<svg class="a" style="left:118px;top:520px" width="135" height="24" viewBox="118 520 135 24">
<path d="M184.5,524.5 L247.5,524.5 L241.5,541.5 L190.5,541.5 Z" fill="#f0f0f0" stroke="#6a6a6a" stroke-width="1"/>
<path d="M120.5,522 L188,522 L181.5,541.5 L128.5,541.5 Z" fill="#fff"/>
<path d="M120.5,523 L128.5,541.5 L181.5,541.5 L188,523" fill="none" stroke="#6a6a6a" stroke-width="1"/>
<path d="M120.5,522.5 L188,522.5" stroke="#e0e0e0" stroke-width="1"/>
</svg>

<div id="status" class="a"></div>
<div class="a" style="left:683px;top:543px;width:1px;height:21px;background:#dadada"></div><div class="a" style="left:556px;top:543px;width:1px;height:21px;background:#dadada"></div><div class="a" style="left:765px;top:543px;width:1px;height:21px;background:#dadada"></div>
<span class="t" style="left:27.70px;top:8px;font-size:11.5px;transform:scaleX(0.9400);transform-origin:1px 0;color:#fff;">Services</span>
<span class="t" style="left:10.00px;top:33px;font-size:11.5px;"><u>F</u>ile</span>
<span class="t" style="left:42.00px;top:33px;font-size:11.5px;"><u>A</u>ction</span>
<span class="t" style="left:90.70px;top:33px;font-size:11.5px;"><u>V</u>iew</span>
<span class="t" style="left:129.80px;top:33px;font-size:11.5px;"><u>H</u>elp</span>
<span class="t" style="left:24.80px;top:82px;font-size:11px;">Services (Local)</span>
<span class="t" style="left:154.60px;top:86px;font-size:11px;">Services (Local)</span>
<span class="t" style="left:126.60px;top:110px;font-size:11.5px;font-weight:bold;transform:scaleX(0.9760);transform-origin:1px 0;">Print Spooler</span>
<span class="t" style="left:126.60px;top:142px;font-size:11.5px;transform:scaleX(0.9750);transform-origin:1px 0;"><span class="lnk">Stop</span> the service</span>
<span class="t" style="left:126.60px;top:156px;font-size:11.5px;transform:scaleX(0.9570);transform-origin:1px 0;"><span class="lnk">Restart</span> the service</span>
<span class="t" style="left:126.00px;top:199px;font-size:11.5px;">Description:</span>
<span class="t" style="left:127.00px;top:213px;font-size:11.5px;transform:scaleX(0.9710);transform-origin:1px 0;">This service spools print jobs and</span>
<span class="t" style="left:126.00px;top:227px;font-size:11.5px;transform:scaleX(1.0170);transform-origin:1px 0;">handles interaction with the printer.</span>
<span class="t" style="left:126.00px;top:241px;font-size:11.5px;transform:scaleX(1.0180);transform-origin:1px 0;">If you turn off this service, you won't</span>
<span class="t" style="left:126.00px;top:255px;font-size:11.5px;transform:scaleX(0.9910);transform-origin:1px 0;">be able to print or see your printers.</span>
<span class="t" style="left:329.00px;top:109px;font-size:11.5px;transform:scaleX(0.9800);transform-origin:1px 0;">Name</span>
<span class="t" style="left:500.60px;top:109px;font-size:11.5px;transform:scaleX(1.0000);transform-origin:1px 0;">Description</span>
<span class="t" style="left:581.70px;top:109px;font-size:11.5px;">Status</span>
<span class="t" style="left:641.60px;top:109px;font-size:11.5px;transform:scaleX(0.9780);transform-origin:1px 0;">Startup Type</span>
<span class="t" style="left:728.60px;top:109px;font-size:11.5px;">Log</span>
<span class="t" style="left:131.00px;top:526px;font-size:11.5px;">Extended</span>
<span class="t" style="left:192.00px;top:526px;font-size:11.5px;">Standard</span>
<div id="bl" class="a"></div><div id="br" class="a"></div><div id="bb" class="a"></div>
</body></html>
